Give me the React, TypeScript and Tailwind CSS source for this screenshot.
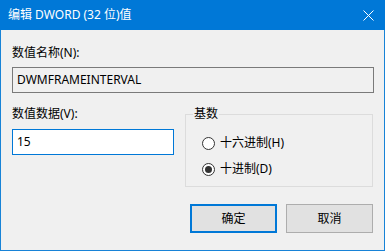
import React from "react";

function Radio({ checked, label }: { checked?: boolean; label: string }) {
  return (
    <div className="flex items-center h-[16px]">
      <div className="w-[13px] h-[13px] rounded-full border border-[#333333] bg-white flex items-center justify-center">
        {checked && <div className="w-[7px] h-[7px] rounded-full bg-[#333333]" />}
      </div>
      <span className="ml-[5px] text-[12px] leading-[16px] text-black">{label}</span>
    </div>
  );
}

export default function App() {
  return (
    <div
      className="w-[385px] h-[251px] flex flex-col bg-[#f0f0f0] border-x border-b border-[#1883d7] font-['Noto_Sans','Noto_Sans_CJK_SC',sans-serif]"
    >
      <div className="h-[30px] shrink-0 bg-[#0078d7] flex items-center justify-between pl-[8px] pr-[10px] -mx-px">
        <span className="text-white text-[12px] leading-[16px]">编辑 DWORD (32 位)值</span>
        <svg width="11" height="11" viewBox="0 0 11 11" className="mr-[1px]">
          <path d="M0.5 0.5 L10.5 10.5 M10.5 0.5 L0.5 10.5" stroke="white" strokeWidth="1" />
        </svg>
      </div>
      <div className="flex flex-col pl-[11px] pr-[10px] pt-[15px] text-[12px] leading-[16px] text-black">
        <div>数值名称(N):</div>
        <div className="mt-[6px] h-[26px] border border-[#7a7a7a] bg-[#f0f0f0] flex items-center pl-[4px]">
          DWMFRAMEINTERVAL
        </div>
        <div className="mt-[13px] flex">
          <div className="w-[162px] flex flex-col">
            <div>数值数据(V):</div>
            <div className="mt-[7px] h-[26px] border border-[#0078d7] bg-white flex items-center pl-[4px]">
              15
            </div>
          </div>
          <fieldset className="ml-[11px] mr-[1px] flex-1 h-[81px] border border-[#dcdcdc] px-0 pb-0">
            <legend className="ml-[7px] px-[1px] leading-[16px]">基数</legend>
            <div className="flex flex-col pl-[16px] pt-[13px] gap-[10px]">
              <Radio label="十六进制(H)" />
              <Radio checked label="十进制(D)" />
            </div>
          </fieldset>
        </div>
        <div className="mt-[17px] flex justify-end gap-[9px] pr-[1px]">
          <button className="w-[87px] h-[29px] border-2 border-[#0078d7] bg-[#e1e1e1] text-[12px]">确定</button>
          <button className="w-[87px] h-[29px] border border-[#adadad] bg-[#e1e1e1] text-[12px]">取消</button>
        </div>
      </div>
    </div>
  );
}
